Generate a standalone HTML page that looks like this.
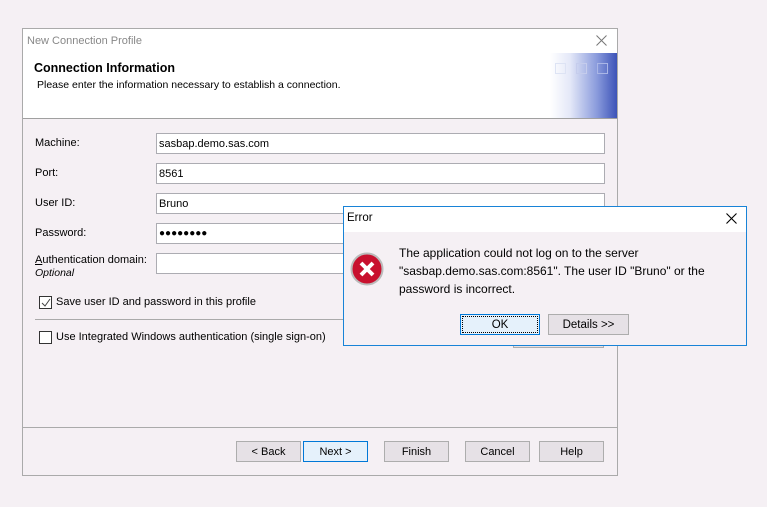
<!DOCTYPE html>
<html><head><style>
*{box-sizing:border-box;margin:0;padding:0}
body{width:767px;height:507px;background:#f5f0f4;font-family:"Liberation Sans",sans-serif;font-size:11px;color:#000;position:relative;overflow:hidden}
.a{position:absolute}
.inp{position:absolute;background:#fff;border:1px solid #acacb2;height:21px;padding:4px 2px 0;font-size:11px}
.btn{position:absolute;background:#e6e1e6;border:1px solid #adadad;height:21px;text-align:center;line-height:20px;font-size:11px}
.lbl{position:absolute;left:35px;font-size:11px}
.cb{position:absolute;width:13px;height:13px;border:1px solid #333;background:#fff}
</style></head><body>
<div class="a" style="left:22px;top:28px;width:596px;height:448px;border:1px solid #aaa;background:#f5f0f4"></div>
<div class="a" style="left:23px;top:29px;width:594px;height:90px;background:#fff;border-bottom:1px solid #a0a0a0"></div>
<div class="a" style="left:27px;top:35px;color:#888;font-size:11px">New Connection Profile</div>
<svg class="a" style="left:596px;top:35px" width="11" height="11"><path d="M0.5 0.5L10.5 10.5M10.5 0.5L0.5 10.5" stroke="#777" stroke-width="1"/></svg>
<div class="a" style="left:34px;top:61px;font-weight:bold;font-size:12.5px">Connection Information</div>
<div class="a" style="left:37px;top:79px;font-size:10.5px">Please enter the information necessary to establish a connection.</div>
<div class="a" style="left:550px;top:53px;width:67px;height:65px;background:linear-gradient(90deg,#fff 0%,#e4e8f8 30%,#8a9bdc 70%,#3c53b8 100%)"></div>
<div class="a" style="left:555px;top:63px;width:11px;height:11px;border:1px solid #dde3f4"></div>
<div class="a" style="left:576px;top:63px;width:11px;height:11px;border:1px solid #c5ccec"></div>
<div class="a" style="left:597px;top:63px;width:11px;height:11px;border:1px solid #aab6e6"></div>

<div class="lbl" style="top:137px">Machine:</div>
<div class="inp" style="left:156px;top:133px;width:449px">sasbap.demo.sas.com</div>
<div class="lbl" style="top:167px">Port:</div>
<div class="inp" style="left:156px;top:163px;width:449px">8561</div>
<div class="lbl" style="top:197px">User ID:</div>
<div class="inp" style="left:156px;top:193px;width:449px">Bruno</div>
<div class="lbl" style="top:227px">Password:</div>
<div class="inp" style="left:156px;top:223px;width:449px;font-size:10px">●●●●●●●●</div>
<div class="lbl" style="top:254px"><u>A</u>uthentication domain:</div>
<div class="lbl" style="top:267px;font-style:italic;font-size:10.5px">Optional</div>
<div class="inp" style="left:156px;top:253px;width:449px"></div>
<div class="cb" style="left:39px;top:296px"></div>
<svg class="a" style="left:41px;top:298px" width="10" height="10"><path d="M1 5L4 8L9 1" stroke="#444" stroke-width="1" fill="none"/></svg>
<div class="a" style="left:56px;top:296px">Save user ID and password in this profile</div>
<div class="a" style="left:35px;top:319px;width:570px;height:1px;background:#aaa"></div>
<div class="cb" style="left:39px;top:331px"></div>
<div class="a" style="left:56px;top:331px">Use Integrated Windows authentication (single sign-on)</div>
<div class="btn" style="left:513px;top:327px;width:91px;height:21px"></div>
<div class="a" style="left:23px;top:427px;width:594px;height:1px;background:#aaa"></div>
<div class="btn" style="left:236px;top:441px;width:65px">&lt; Back</div>
<div class="btn" style="left:303px;top:441px;width:65px;background:#e5f1fb;border-color:#0078d7">Next &gt;</div>
<div class="btn" style="left:384px;top:441px;width:65px">Finish</div>
<div class="btn" style="left:465px;top:441px;width:65px">Cancel</div>
<div class="btn" style="left:539px;top:441px;width:65px">Help</div>

<div class="a" style="left:343px;top:206px;width:404px;height:140px;border:1px solid #1883d7;background:#f5f0f4"></div>
<div class="a" style="left:344px;top:207px;width:402px;height:25px;background:#fff"></div>
<div class="a" style="left:347px;top:212px;font-size:11.5px">Error</div>
<svg class="a" style="left:726px;top:213px" width="11" height="11"><path d="M0.5 0.5L10.5 10.5M10.5 0.5L0.5 10.5" stroke="#000" stroke-width="1.1"/></svg>
<svg class="a" style="left:350px;top:252px" width="34" height="34" viewBox="0 0 34 34">
<circle cx="17" cy="17" r="15.5" fill="#c8102e" stroke="#bbb" stroke-width="2"/>
<path d="M11 11L23 23M23 11L11 23" stroke="#fff" stroke-width="4"/></svg>
<div class="a" style="left:399px;top:244px;font-size:12px;line-height:18px">The application could not log on to the server<br>"sasbap.demo.sas.com:8561". The user ID "Bruno" or the<br>password is incorrect.</div>
<div class="btn" style="left:460px;top:314px;width:80px;background:#e5f1fb;border:1px solid #0078d7;outline:1px dotted #000;outline-offset:-3px;font-size:11.5px">OK</div>
<div class="btn" style="left:548px;top:314px;width:81px;font-size:11.5px">Details &gt;&gt;</div>
</body></html>
